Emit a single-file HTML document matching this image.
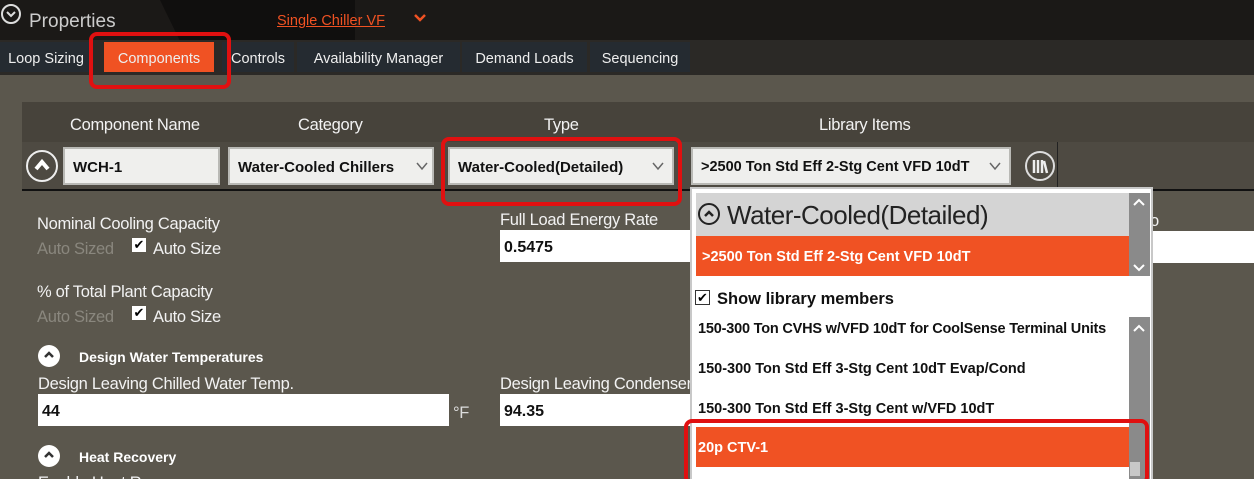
<!DOCTYPE html>
<html><head><style>
*{margin:0;padding:0;box-sizing:border-box}
html,body{width:1254px;height:479px;overflow:hidden}
body{background:#5b574d;font-family:"Liberation Sans",sans-serif;position:relative;color:#fff}
.a{position:absolute;white-space:nowrap}
.inp{position:absolute;background:#efefed;border:2px solid #b9b9b5;color:#111;font-weight:bold;font-size:15px;padding-left:8px;padding-top:2px;display:flex;align-items:center}
.wt{position:absolute;background:#fff;color:#111;font-weight:bold;font-size:16px;padding-left:4px;padding-top:3px;display:flex;align-items:center}
.lbl{font-size:16.5px;color:#f2f2f2;letter-spacing:-0.3px}
.red{position:absolute;border:4px solid #e01010;border-radius:8px}
.tab{position:absolute;top:42px;height:30px;background:#252b31;font-size:14.5px;display:flex;align-items:center;justify-content:center;color:#eee;padding-top:3px}
.chev{position:absolute;top:13px}
</style></head><body>
<div class="a" style="left:0;top:0;width:1254px;height:40px;background:#1b1917"></div>
<div class="a" style="left:160px;top:0;width:195px;height:40px;background:#100f0e;clip-path:polygon(0 0,100% 0,100% 100%,10% 100%)"></div>
<div class="a" style="left:1px;top:4px;width:20px;height:20px;border:2px solid #ddd;border-radius:50%"></div>
<svg class="a" style="left:5px;top:9px" width="12" height="10"><path d="M2 3 L6 7 L10 3" stroke="#ddd" stroke-width="2" fill="none"/></svg>
<div class="a" style="left:29px;top:11px;font-size:19px;color:#ccc">Properties</div>
<div class="a" style="left:277px;top:13px;font-size:14.5px;color:#f05223;text-decoration:underline">Single Chiller VF</div>
<svg class="a" style="left:413px;top:13px" width="14" height="10"><path d="M2 2 L7 7 L12 2" stroke="#f05223" stroke-width="2.5" fill="none"/></svg>
<div class="a" style="left:0;top:40px;width:1254px;height:35px;background:#2b2926"></div>
<div class="tab" style="left:0;width:92px">Loop Sizing</div>
<div class="tab" style="left:104px;width:110px;background:#f05223">Components</div>
<div class="tab" style="left:222px;width:72px">Controls</div>
<div class="tab" style="left:297px;width:163px">Availability Manager</div>
<div class="tab" style="left:462px;width:125px">Demand Loads</div>
<div class="tab" style="left:590px;width:100px">Sequencing</div>
<div class="red" style="left:89px;top:32px;width:142px;height:57px"></div>

<div class="a" style="left:22px;top:102px;width:1232px;height:40px;background:#47433b"></div>
<div class="a" style="left:22px;top:142px;width:1232px;height:48px;background:#4e4a42"></div>
<div class="a" style="left:22px;top:189px;width:1232px;height:2px;background:#111"></div>
<div class="a" style="left:1057px;top:142px;width:1px;height:48px;background:#222"></div>
<div class="a lbl" style="left:70px;top:116px">Component Name</div>
<div class="a lbl" style="left:298px;top:116px">Category</div>
<div class="a lbl" style="left:544px;top:116px">Type</div>
<div class="a lbl" style="left:819px;top:116px">Library Items</div>
<div class="a" style="left:26px;top:150px;width:32px;height:32px;border:2px solid #eee;border-radius:50%"></div>
<svg class="a" style="left:33px;top:158px" width="18" height="14"><path d="M3 11 L9 4 L15 11" stroke="#fff" stroke-width="4" fill="none"/></svg>
<div class="inp" style="left:63px;top:147px;width:157px;height:38px">WCH-1</div>
<div class="inp" style="left:228px;top:147px;width:206px;height:38px">Water-Cooled Chillers<svg class="chev" style="left:186px" width="12" height="9"><path d="M1 1 L6 7 L11 1" stroke="#666" stroke-width="1.5" fill="none"/></svg></div>
<div class="inp" style="left:448px;top:147px;width:226px;height:38px">Water-Cooled(Detailed)<svg class="chev" style="left:202px" width="12" height="9"><path d="M1 1 L6 7 L11 1" stroke="#666" stroke-width="1.5" fill="none"/></svg></div>
<div class="inp" style="left:691px;top:147px;width:320px;height:38px;font-size:14.5px">&gt;2500 Ton Std Eff 2-Stg Cent VFD 10dT<svg class="chev" style="left:296px" width="12" height="9"><path d="M1 1 L6 7 L11 1" stroke="#666" stroke-width="1.5" fill="none"/></svg></div>
<div class="a" style="left:1025px;top:151px;width:30px;height:30px;border:2px solid #ddd;border-radius:50%"></div>
<svg class="a" style="left:1031px;top:157px" width="18" height="18"><path d="M3 3v13M7 3v13M11 3v13M13 4l3 12" stroke="#eee" stroke-width="2.5" fill="none"/></svg>
<div class="red" style="left:441px;top:137px;width:241px;height:69px"></div>

<div class="a lbl" style="left:37px;top:215px">Nominal Cooling Capacity</div>
<div class="a lbl" style="left:37px;top:240px;color:#8a877e">Auto Sized</div>
<div class="a" style="left:132px;top:238px;width:14px;height:14px;background:#fff;color:#000;font-size:13px;line-height:14px;text-align:center">&#10004;</div>
<div class="a lbl" style="left:153px;top:240px">Auto Size</div>
<div class="a lbl" style="left:37px;top:283px">% of Total Plant Capacity</div>
<div class="a lbl" style="left:37px;top:308px;color:#8a877e">Auto Sized</div>
<div class="a" style="left:132px;top:306px;width:14px;height:14px;background:#fff;color:#000;font-size:13px;line-height:14px;text-align:center">&#10004;</div>
<div class="a lbl" style="left:153px;top:308px">Auto Size</div>
<div class="a" style="left:38px;top:345px;width:22px;height:22px;background:#fff;border-radius:50%"></div>
<svg class="a" style="left:43px;top:350px" width="12" height="10"><path d="M2 7 L6 3 L10 7" stroke="#333" stroke-width="2.5" fill="none"/></svg>
<div class="a" style="left:79px;top:349px;font-size:14px;font-weight:bold">Design Water Temperatures</div>
<div class="a lbl" style="left:38px;top:375px">Design Leaving Chilled Water Temp.</div>
<div class="wt" style="left:38px;top:394px;width:411px;height:32px">44</div>
<div class="a lbl" style="left:453px;top:404px;color:#ddd">°F</div>
<div class="a" style="left:38px;top:445px;width:22px;height:22px;background:#fff;border-radius:50%"></div>
<svg class="a" style="left:43px;top:450px" width="12" height="10"><path d="M2 7 L6 3 L10 7" stroke="#333" stroke-width="2.5" fill="none"/></svg>
<div class="a" style="left:79px;top:449px;font-size:14px;font-weight:bold">Heat Recovery</div>
<div class="a lbl" style="left:38px;top:474px">Enable Heat Recovery</div>
<div class="a lbl" style="left:500px;top:211px">Full Load Energy Rate</div>
<div class="wt" style="left:500px;top:230px;width:200px;height:32px">0.5475</div>
<div class="a lbl" style="left:500px;top:375px">Design Leaving Condenser</div>
<div class="wt" style="left:500px;top:394px;width:200px;height:32px">94.35</div>
<div class="a lbl" style="left:1150px;top:212px">o</div>
<div class="wt" style="left:1150px;top:231px;width:104px;height:32px"></div>

<div class="a" style="left:690px;top:187px;width:463px;height:292px;background:#fff;border:2px solid #c8c8c8;border-bottom:none"></div>
<div class="a" style="left:696px;top:193px;width:433px;height:43px;background:#d4d4d4"></div>
<div class="a" style="left:698px;top:203px;width:22px;height:22px;border:2px solid #222;border-radius:50%"></div>
<svg class="a" style="left:703px;top:209px" width="12" height="10"><path d="M2 7 L6 3 L10 7" stroke="#222" stroke-width="2.5" fill="none"/></svg>
<div class="a" style="left:727px;top:200px;font-size:26px;color:#222;letter-spacing:-0.5px">Water-Cooled(Detailed)</div>
<div class="a" style="left:696px;top:236px;width:433px;height:40px;background:#f05223;font-weight:bold;font-size:14.5px;color:#fff;padding:13px 0 0 6px">&gt;2500 Ton Std Eff 2-Stg Cent VFD 10dT</div>
<div class="a" style="left:1129px;top:193px;width:21px;height:83px;background:#8a8a8a"></div>
<svg class="a" style="left:1132px;top:196px" width="14" height="78"><path d="M2 9 L7 4 L12 9 M2 69 L7 74 L12 69" stroke="#fff" stroke-width="2" fill="none"/></svg>
<div class="a" style="left:695px;top:290px;width:15px;height:15px;border:1.5px solid #333;color:#000;font-size:13px;line-height:13px;text-align:center">&#10004;</div>
<div class="a" style="left:717px;top:290px;font-size:16.5px;font-weight:bold;color:#111">Show library members</div>
<div class="a" style="left:1129px;top:317px;width:21px;height:162px;background:#8a8a8a"></div>
<svg class="a" style="left:1132px;top:322px" width="14" height="12"><path d="M2 9 L7 4 L12 9" stroke="#fff" stroke-width="2" fill="none"/></svg>
<div class="a" style="left:1130px;top:462px;width:10px;height:14px;background:#c8c8c8"></div>
<div class="a" style="left:698px;top:321px;font-size:14.5px;font-weight:bold;color:#111;letter-spacing:-0.2px">150-300 Ton CVHS w/VFD 10dT for CoolSense Terminal Units</div>
<div class="a" style="left:698px;top:361px;font-size:14.5px;font-weight:bold;color:#111">150-300 Ton Std Eff 3-Stg Cent 10dT Evap/Cond</div>
<div class="a" style="left:698px;top:401px;font-size:14.5px;font-weight:bold;color:#111">150-300 Ton Std Eff 3-Stg Cent w/VFD 10dT</div>
<div class="a" style="left:696px;top:427px;width:433px;height:40px;background:#f05223;font-weight:bold;font-size:14.5px;color:#fff;padding:13px 0 0 2px">20p CTV-1</div>
<div class="red" style="left:684px;top:419px;width:465px;height:66px"></div>
</body></html>
